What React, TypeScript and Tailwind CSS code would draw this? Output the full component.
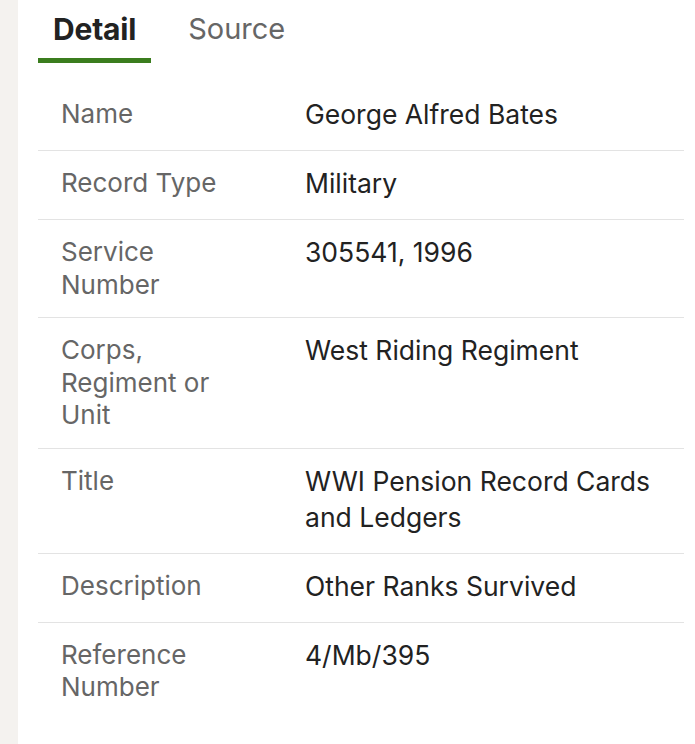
import React from "react";

const rows: [string, string][] = [
  ["Name", "George Alfred Bates"],
  ["Record Type", "Military"],
  ["Service Number", "305541, 1996"],
  ["Corps, Regiment or Unit", "West Riding Regiment"],
  ["Title", "WWI Pension Record Cards and Ledgers"],
  ["Description", "Other Ranks Survived"],
  ["Reference Number", "4/Mb/395"],
];

export default function App() {
  return (
    <div
      className="flex w-[695px] h-[744px] bg-white overflow-hidden"
      style={{ fontFamily: "Inter, 'Liberation Sans', sans-serif" }}
    >
      <div className="w-[18px] shrink-0 bg-[#f4f2ef]" />
      <div className="flex-1 pl-[20px] pr-[11px]">
        <div className="flex items-end">
          <div className="px-[15px] pt-[11px] pb-[11px] border-b-[5px] border-[#3b7d1e]">
            <span className="text-[30px] leading-[36px] font-bold text-[#222] tracking-[-0.2px]">Detail</span>
          </div>
          <div className="ml-[22px] px-[15px] pt-[11px] pb-[11px] border-b-[5px] border-transparent">
            <span className="text-[29px] leading-[36px] text-[#666]">Source</span>
          </div>
        </div>
        <div className="mt-[19px]">
          {rows.map(([label, value], i) => (
            <div
              key={label}
              className={`flex py-[16px] ${i < rows.length - 1 ? "border-b border-[#e3e3e3]" : ""}`}
            >
              <div className="w-[267px] shrink-0 pl-[23px] pr-[70px] text-[26px] leading-[32.5px] text-[#666]">
                {label}
              </div>
              <div className="flex-1 pr-[20px] -mt-[2px] pb-[2px] text-[26.5px] leading-[36px] text-[#222]">{value}</div>
            </div>
          ))}
        </div>
      </div>
    </div>
  );
}
